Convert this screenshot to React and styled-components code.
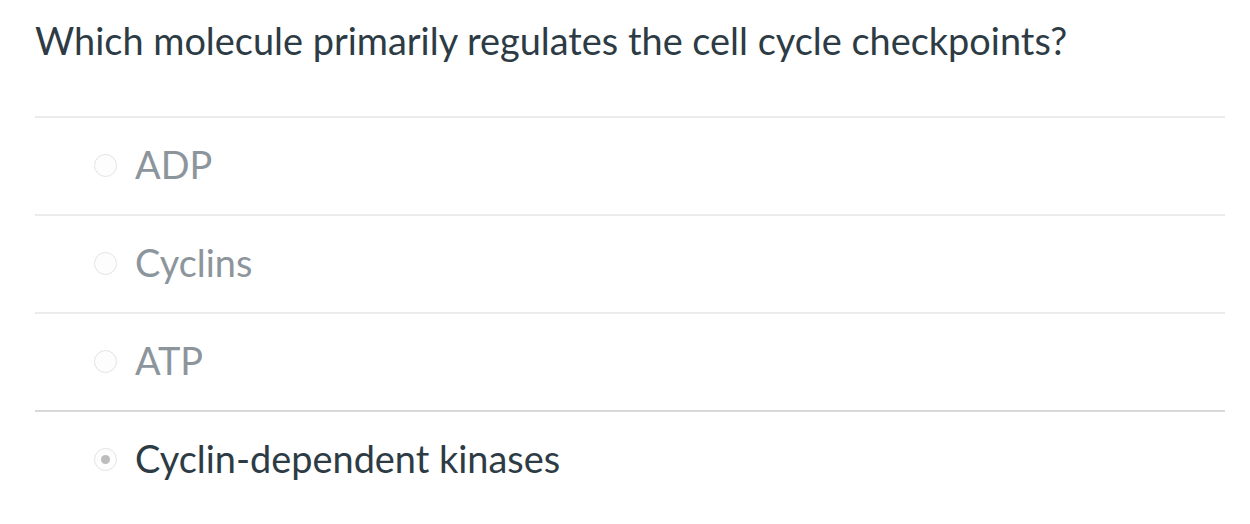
import React from "react";
import styled, { createGlobalStyle } from "styled-components";

const Global = createGlobalStyle`
  body {
    margin: 0;
    background: #ffffff;
    font-family: Lato, "Liberation Sans", sans-serif;
  }
`;

const Page = styled.div`
  padding: 19px 25px 0 35px;
`;

const Question = styled.h1`
  margin: 0 0 53px;
  font-size: 37.9px;
  line-height: 44px;
  font-weight: 400;
  color: #2d3b45;
`;

const Answers = styled.div`
  display: flex;
  flex-direction: column;
`;

const Answer = styled.label`
  box-sizing: border-box;
  display: flex;
  align-items: center;
  gap: 18px;
  height: 98px;
  padding: 0 0 3px 59px;
  border-top: 2px solid ${(p) => (p.$selected ? "#d9d9d9" : "#ebebeb")};
`;

const Radio = styled.span`
  box-sizing: border-box;
  width: 23px;
  height: 23px;
  margin-top: 2px;
  border-radius: 50%;
  border: 1px solid #e3e3e3;
  background: #fdfdfd;
  display: flex;
  align-items: center;
  justify-content: center;

  &::after {
    content: "";
    width: 9px;
    height: 9px;
    border-radius: 50%;
    background: ${(p) => (p.$checked ? "#bdbdbd" : "transparent")};
  }
`;

const AnswerText = styled.span`
  font-size: 37.9px;
  color: ${(p) => (p.$selected ? "#2d3b45" : "#8d959c")};
`;

const answers = ["ADP", "Cyclins", "ATP", "Cyclin-dependent kinases"];
const selected = 3;

export default function App() {
  return (
    <Page>
      <Global />
      <Question>Which molecule primarily regulates the cell cycle checkpoints?</Question>
      <Answers>
        {answers.map((a, i) => (
          <Answer key={a} $selected={i === selected}>
            <Radio $checked={i === selected} />
            <AnswerText $selected={i === selected}>{a}</AnswerText>
          </Answer>
        ))}
      </Answers>
    </Page>
  );
}
